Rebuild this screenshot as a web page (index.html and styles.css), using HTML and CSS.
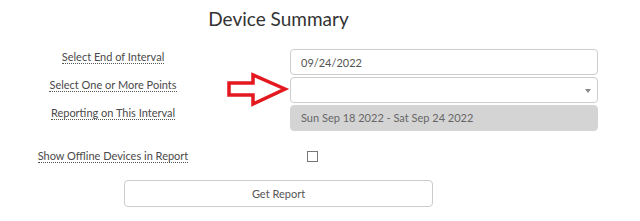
FILE: index.html
```html
<!DOCTYPE html>
<html lang="en">
<head>
    <meta charset="UTF-8">
    <title>Device Summary</title>
    <link rel="stylesheet" href="styles.css">
</head>
<body>

<div class="page">
    <h1 class="page-title">Device Summary</h1>

    <div class="form-grid">
        <div class="field-label"><abbr title="Last day of the reporting interval">Select End of Interval</abbr></div>
        <input type="text" class="field-input" value="09/24/2022">

        <div class="field-label"><abbr title="Points to include">Select One or More Points</abbr></div>
        <div class="field-input field-select"><span class="caret"></span></div>

        <div class="field-label"><abbr title="Computed interval">Reporting on This Interval</abbr></div>
        <div class="field-input field-readonly">Sun Sep 18 2022 - Sat Sep 24 2022</div>
    </div>

    <div class="form-grid offline-row">
        <div class="field-label"><abbr title="Include offline devices">Show Offline Devices in Report</abbr></div>
        <div class="check-cell"><span class="check-box"></span></div>
    </div>

    <button class="report-button">Get Report</button>

    <svg class="callout-arrow" width="64" height="36" viewBox="0 0 64 36">
        <polygon points="3,11 27,11 27,3 59,17 27,32 27,23 3,23" fill="#fff" stroke="#e3191f" stroke-width="3.5"/>
    </svg>
</div>

</body>
</html>
```

FILE: styles.css
```css
body {
    margin: 0;
    padding: 0;
    background-color: #fff;
    font-family: 'Lato', 'Liberation Sans', sans-serif;
    color: #4a4a4a;
}
.page {
    position: relative;
    padding-top: 7px;
}
.page-title {
    width: 557px;
    margin: 0 0 18px;
    text-align: center;
    font-size: 19px;
    line-height: 24px;
    font-weight: normal;
    color: #333;
}
.form-grid {
    display: grid;
    grid-template-columns: 226px 308px;
    grid-auto-rows: 26px;
    column-gap: 64px;
    row-gap: 2px;
}
.field-label {
    text-align: center;
    font-size: 11px;
    line-height: 14px;
    padding-top: 1px;
}
.field-label abbr {
    text-decoration: none;
    border-bottom: 1px dotted #555;
}
.field-input {
    box-sizing: border-box;
    height: 26px;
    margin: 0;
    padding: 0 10px;
    border: 1px solid #ccc;
    border-radius: 4px;
    background-color: #fff;
    font-family: inherit;
    font-size: 11px;
    line-height: 24px;
    color: #555;
}
.field-select {
    position: relative;
}
.caret {
    position: absolute;
    right: 6px;
    top: 11px;
    border-left: 3px solid transparent;
    border-right: 3px solid transparent;
    border-top: 4px solid #888;
}
.field-readonly {
    border-color: #d4d4d4;
    background-color: #d4d4d4;
    color: #666;
}
.offline-row {
    margin-top: 14px;
    grid-auto-rows: 22px;
}
.offline-row .field-label {
    padding-top: 4px;
}
.check-cell {
    display: flex;
    align-items: center;
    padding-left: 17px;
}
.check-box {
    box-sizing: border-box;
    width: 11px;
    height: 11px;
    border: 1px solid #777;
    background-color: #fff;
}
.report-button {
    display: block;
    box-sizing: border-box;
    width: 309px;
    height: 27px;
    margin: 13px 0 0 124px;
    border: 1px solid #ccc;
    border-radius: 4px;
    background-color: #fff;
    font-family: inherit;
    font-size: 11px;
    color: #555;
}
.callout-arrow {
    position: absolute;
    left: 226px;
    top: 72px;
}
```
